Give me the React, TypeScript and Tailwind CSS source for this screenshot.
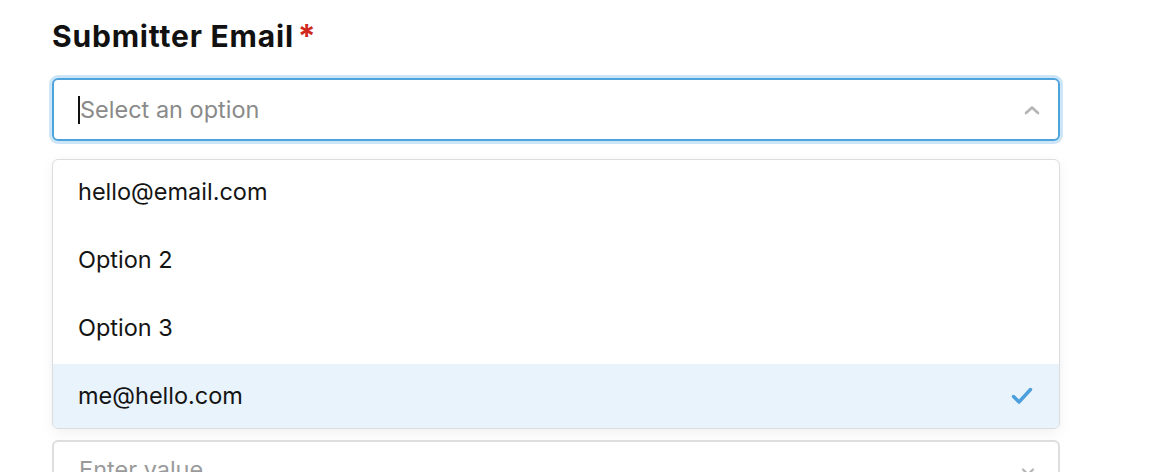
import { ChevronDown } from "lucide-react";

const options = ["hello@email.com", "Option 2", "Option 3", "me@hello.com"];
const selected = "me@hello.com";

function ChevronUpSmall() {
  return (
    <svg width="16" height="10" viewBox="0 0 16 10" fill="none">
      <path d="M2 8L8 2.5L14 8" stroke="#b4b4b4" strokeWidth="2.6" strokeLinecap="round" strokeLinejoin="round" />
    </svg>
  );
}

function Check() {
  return (
    <svg width="22" height="20" viewBox="0 0 22 20" fill="none">
      <path d="M2.5 10.5L8 16L19.5 3.5" stroke="#4a9fdc" strokeWidth="3.4" strokeLinecap="round" strokeLinejoin="round" />
    </svg>
  );
}

export default function App() {
  return (
    <div className="h-[472px] w-full overflow-hidden bg-white font-['Inter','Liberation_Sans',sans-serif]">
      <div className="ml-[52px] w-[1008px] pt-[16px]">
        <label className="flex items-center h-[40px] text-[30px] font-bold tracking-[0.8px] text-[#111111]">
          <span>Submitter Email</span>
          <span className="ml-[4px] mt-[2px] text-[32px] text-[#d0281c]">*</span>
        </label>

        <div className="mt-[22px] flex h-[63px] items-center rounded-[6px] border-2 border-[#4fa3dc] pl-[24px] pr-[18px] shadow-[0_0_0_3px_#cce5f7]">
          <span className="h-[28px] w-[2px] bg-[#111]" />
          <span className="flex-1 text-[23.5px] text-[#8a8a8a]">Select an option</span>
          <ChevronUpSmall />
        </div>

        <div className="mt-[18px] overflow-hidden rounded-[6px] border border-[#dcdcdc] bg-white shadow-[0_4px_14px_rgba(0,0,0,0.06)]">
          <ul className="flex flex-col gap-1">
            {options.map((o) => (
              <li
                key={o}
                className={`flex h-16 items-center justify-between pl-[25px] pr-[26px] text-[23.5px] text-[#141414] ${
                  o === selected ? "bg-[#e8f3fc]" : ""
                }`}
              >
                {o}
                {o === selected && <Check />}
              </li>
            ))}
          </ul>
        </div>

        <div className="mt-[11px] flex h-[63px] items-center rounded-[6px] border-2 border-[#dedede] pl-[25px] pr-[20px]">
          <span className="flex-1 -translate-y-[2px] text-[23.5px] text-[#9a9a9a]">Enter value</span>
          <ChevronDown className="text-[#b4b4b4]" size={20} strokeWidth={2.6} />
        </div>
      </div>
    </div>
  );
}
